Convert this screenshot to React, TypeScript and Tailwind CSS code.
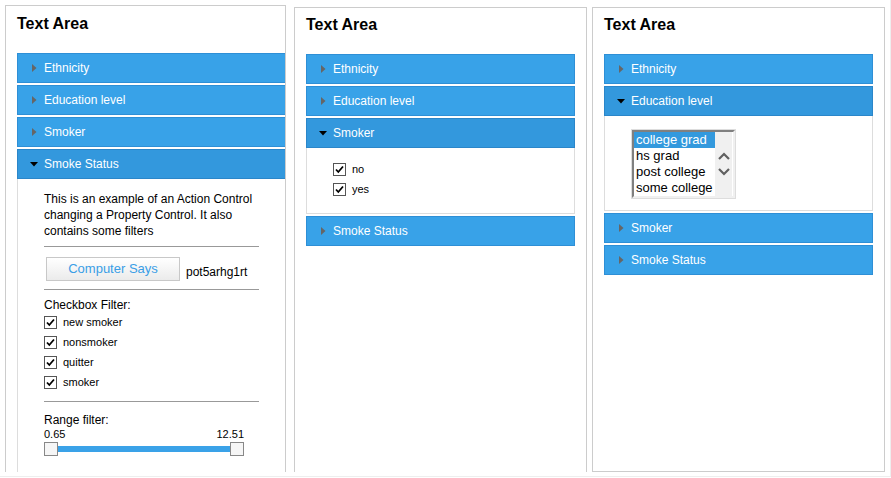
import { ReactNode } from "react";

const Arrow = ({ open }: { open: boolean }) =>
  open ? (
    <svg width="8" height="5" viewBox="0 0 8 5" className="shrink-0">
      <path d="M0 0 L8 0 L4 4.5 Z" fill="#000" />
    </svg>
  ) : (
    <svg width="5" height="8" viewBox="0 0 5 8" className="shrink-0">
      <path d="M0 0 L4.5 4 L0 8 Z" fill="#666" />
    </svg>
  );

const Header = ({ label, open = false }: { label: string; open?: boolean }) => (
  <div
    className={
      open
        ? "h-[30px] flex items-center border border-[#2b86c9] bg-[#3398dd] text-white text-[12px]"
        : "h-[30px] mb-[2px] flex items-center border border-[#2e8fd6] bg-[#38a2e8] text-white text-[12px]"
    }
  >
    <div className={open ? "w-[26px] pl-[12px] flex" : "w-[26px] pl-[14px] flex"}>
      <Arrow open={open} />
    </div>
    <span>{label}</span>
  </div>
);

const Content = ({ children, className }: { children: ReactNode; className: string }) => (
  <div className={"border border-t-0 border-[#dddddd] mb-[2px] " + className}>{children}</div>
);

const Check = ({ label }: { label: string }) => (
  <div className="h-[20px] flex items-center gap-[6px] text-[11px] text-black">
    <svg width="13" height="13" viewBox="0 0 13 13" className="shrink-0">
      <rect x="0.5" y="0.5" width="12" height="12" fill="#fff" stroke="#555" />
      <path d="M3 6.5 L5.3 9 L10 3.5" fill="none" stroke="#000" strokeWidth="1.8" />
    </svg>
    <span>{label}</span>
  </div>
);

const Panel = ({
  className,
  children
}: {
  className: string;
  children: ReactNode;
}) => (
  <div className={"shrink-0 border border-[#cccccc] bg-white pl-[11px] " + className}>
    <h2 className="text-[16px] leading-[18px] font-bold text-black mb-[20px]">Text Area</h2>
    <div className="w-[269px]">{children}</div>
  </div>
);

const RangeSlider = () => (
  <div className="relative w-[200px] h-[14px]">
    <div className="absolute left-[13px] right-[13px] top-[4px] h-[6px] bg-[#3aa2e8]" />
    <div className="absolute left-0 top-0 w-[14px] h-[14px] border border-[#888] bg-[#f6f6f6]" />
    <div className="absolute right-0 top-0 w-[14px] h-[14px] border border-[#888] bg-[#f6f6f6]" />
  </div>
);

const ListBox = () => {
  const items = ["college grad", "hs grad", "post college", "some college"];
  return (
    <div className="w-[105px] border border-[#dddddd]">
      <div className="flex border-2 border-t-[#808080] border-l-[#808080] border-b-[#f0f0f0] border-r-[#f0f0f0]">
        <ul className="w-[81px] text-[13px] leading-[16px] text-black">
          {items.map((item, i) => (
            <li
              key={item}
              className={i === 0 ? "pl-[2px] bg-[#3399dd] text-white whitespace-nowrap" : "pl-[2px] whitespace-nowrap"}
            >
              {item}
            </li>
          ))}
        </ul>
        <div className="w-[17px] bg-[#f0f0f0] flex flex-col items-center justify-center gap-[8px]">
          <svg width="12" height="8" viewBox="0 0 12 8">
            <path d="M1 7 L6 2 L11 7" fill="none" stroke="#606060" strokeWidth="2.2" />
          </svg>
          <svg width="12" height="8" viewBox="0 0 12 8">
            <path d="M1 1 L6 6 L11 1" fill="none" stroke="#606060" strokeWidth="2.2" />
          </svg>
        </div>
      </div>
    </div>
  );
};

export default function App() {
  return (
    <div className="w-[891px] h-[478px] bg-white" style={{ fontFamily: '"Liberation Sans", Arial, sans-serif' }}>
      <div className="w-[891px] h-[477px] border-b border-r border-[#eeeeee]">
        <div className="h-[472px] overflow-hidden flex items-start">
          <Panel className="ml-[5px] mt-[5px] pt-[9px] w-[281px] h-[600px] overflow-hidden">
            <Header label="Ethnicity" />
            <Header label="Education level" />
            <Header label="Smoker" />
            <Header label="Smoke Status" open />
            <Content className="px-[26px] pt-[12px] pb-[20px] text-[12px] text-black">
              <p className="leading-[16px]">
                This is an example of an Action Control changing a Property Control. It also contains some filters
              </p>
              <hr className="mt-[7px] border-[#999999]" />
              <div className="mt-[10px] flex items-center gap-[6px]">
                <button className="w-[134px] h-[24px] border border-[#c8c8c8] bg-gradient-to-b from-[#ffffff] to-[#ebebeb] text-[13px] text-[#3a9ee6] ml-[2px]">
                  Computer Says
                </button>
                <span className="text-[12px] pt-[6px]">pot5arhg1rt</span>
              </div>
              <hr className="mt-[8px] border-[#999999]" />
              <div className="mt-[8px] leading-[14px]">Checkbox Filter:</div>
              <Check label="new smoker" />
              <Check label="nonsmoker" />
              <Check label="quitter" />
              <Check label="smoker" />
              <hr className="mt-[9px] border-[#999999]" />
              <div className="mt-[11px] leading-[15px]">Range filter:</div>
              <div className="w-[200px] flex justify-between text-[11px] leading-[13px]">
                <span>0.65</span>
                <span>12.51</span>
              </div>
              <div className="mt-[1px]">
                <RangeSlider />
              </div>
            </Content>
          </Panel>

          <Panel className="ml-[8px] mt-[7px] pt-[8px] w-[293px] h-[600px]">
            <Header label="Ethnicity" />
            <Header label="Education level" />
            <Header label="Smoker" open />
            <Content className="pl-[26px] pt-[11px] pb-[14px]">
              <Check label="no" />
              <Check label="yes" />
            </Content>
            <Header label="Smoke Status" />
          </Panel>

          <Panel className="ml-[5px] mt-[7px] pt-[8px] w-[293px] h-[465px]">
            <Header label="Ethnicity" />
            <Header label="Education level" open />
            <Content className="pl-[26px] pt-[13px] pb-[11px]">
              <ListBox />
            </Content>
            <Header label="Smoker" />
            <Header label="Smoke Status" />
          </Panel>
        </div>
      </div>
    </div>
  );
}
